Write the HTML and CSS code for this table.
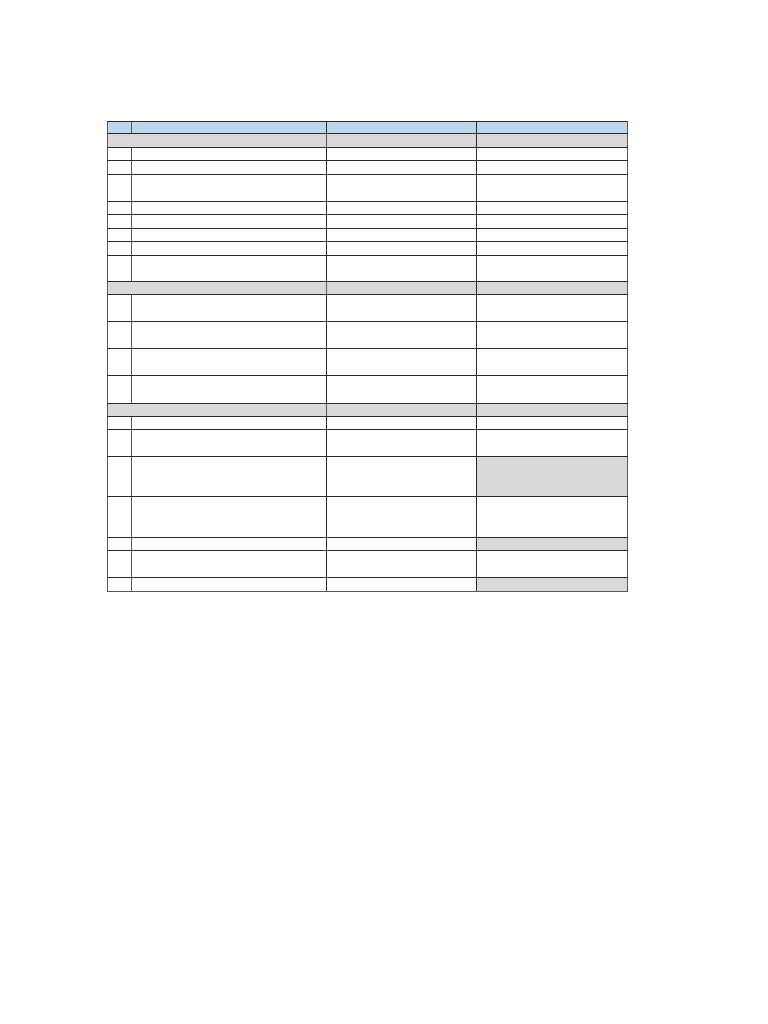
FILE: index.html
```html
<!DOCTYPE html>
<html lang="en">
<head>
<meta charset="utf-8">
<title>Sheet</title>
<link rel="stylesheet" href="styles.css">
</head>
<body>
<main class="page">
  <table class="sheet">
    <colgroup>
      <col class="c-num">
      <col class="c-item">
      <col class="c-a">
      <col class="c-b">
    </colgroup>
    <tr class="head r12"><td></td><td></td><td></td><td></td></tr>
    <tr class="section r14"><td colspan="2"></td><td></td><td></td></tr>
    <tr class="r13"><td></td><td></td><td></td><td></td></tr>
    <tr class="r14"><td></td><td></td><td></td><td></td></tr>
    <tr class="r27"><td></td><td></td><td></td><td></td></tr>
    <tr class="r13"><td></td><td></td><td></td><td></td></tr>
    <tr class="r14"><td></td><td></td><td></td><td></td></tr>
    <tr class="r13"><td></td><td></td><td></td><td></td></tr>
    <tr class="r14"><td></td><td></td><td></td><td></td></tr>
    <tr class="r26"><td></td><td></td><td></td><td></td></tr>
    <tr class="section r13"><td colspan="2"></td><td></td><td></td></tr>
    <tr class="r27"><td></td><td></td><td></td><td></td></tr>
    <tr class="r27"><td></td><td></td><td></td><td></td></tr>
    <tr class="r27"><td></td><td></td><td></td><td></td></tr>
    <tr class="r28"><td></td><td></td><td></td><td></td></tr>
    <tr class="section r13"><td colspan="2"></td><td></td><td></td></tr>
    <tr class="r13"><td></td><td></td><td></td><td></td></tr>
    <tr class="r27"><td></td><td></td><td></td><td></td></tr>
    <tr class="r40"><td></td><td></td><td></td><td class="shade"></td></tr>
    <tr class="r41"><td></td><td></td><td></td><td></td></tr>
    <tr class="r13"><td></td><td></td><td></td><td class="shade"></td></tr>
    <tr class="r27"><td></td><td></td><td></td><td></td></tr>
    <tr class="r14"><td></td><td></td><td></td><td class="shade"></td></tr>
  </table>
</main>
</body>
</html>
```

FILE: styles.css
```css
html, body {
  margin: 0;
  padding: 0;
  background: #ffffff;
  font-family: "Liberation Sans", Arial, sans-serif;
}

.page {
  padding: 121px 0 0 107px;
}

.sheet {
  border-collapse: collapse;
  table-layout: fixed;
  width: 521px;
  border: 1px solid #5a5a5a;
}

.c-num { width: 24px; }
.c-item { width: 195px; }
.c-a { width: 150px; }
.c-b { width: 151px; }

.sheet td {
  padding: 0;
  border: 1px solid #2a2a2a;
  background: #ffffff;
}

.sheet td:first-child {
  border-left-color: #5a5a5a;
}

.sheet tr > td:nth-child(1) {
  border-right-color: #555555;
}

.sheet tr > td:last-child {
  border-right-color: #5a5a5a;
}

.sheet tr:last-child > td {
  border-bottom-color: #5a5a5a;
}

.head td {
  background: #bdd7ee;
}

.section td {
  background: #d9d9d9;
}

.sheet td.shade {
  background: #d9d9d9;
}

.r12 { height: 12px; }
.r13 { height: 13px; }
.r14 { height: 14px; }
.r26 { height: 26px; }
.r27 { height: 27px; }
.r28 { height: 28px; }
.r40 { height: 40px; }
.r41 { height: 41px; }
```
